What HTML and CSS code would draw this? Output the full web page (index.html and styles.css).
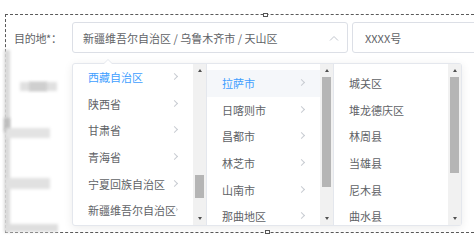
FILE: index.html
```html
<!DOCTYPE html>
<html lang="zh">
<head>
<meta charset="utf-8">
<title>目的地</title>
<link rel="stylesheet" href="styles.css">
</head>
<body>
<div class="stage">
  <div class="frame">
    <div class="form-row">
      <label class="label">目的地*：</label>
      <div class="input cascader">
        <span class="value">新疆维吾尔自治区 / 乌鲁木齐市 / 天山区</span>
        <svg class="caret" width="10" height="6" viewBox="0 0 10 6"><polyline points="1,5.5 5,1.5 9,5.5" fill="none" stroke="#c0c4cc" stroke-width="1"/></svg>
      </div>
      <div class="input addr"><span class="value">XXXX号</span></div>
    </div>

    <div class="backdrop">
      <div class="blur strip"></div>
      <div class="blur strip-dark"></div>
      <div class="blur b1"></div>
      <div class="blur b1c"></div>
      <div class="blur b2"></div>
      <div class="blur b3"></div>
      <div class="blur b4"></div>
    </div>

    <span class="handle handle-top"></span>
    <span class="handle handle-bottom"></span>

    <div class="dropdown">
      <span class="pop-arrow"></span>
      <div class="menu menu-1">
        <ul class="list list-scrolled">
          <li class="item active"><span>西藏自治区</span><i class="chev"></i></li>
          <li class="item"><span>陕西省</span><i class="chev"></i></li>
          <li class="item"><span>甘肃省</span><i class="chev"></i></li>
          <li class="item"><span>青海省</span><i class="chev"></i></li>
          <li class="item"><span>宁夏回族自治区</span><i class="chev"></i></li>
          <li class="item"><span class="over">新疆维吾尔自治区</span><i class="chev"></i></li>
        </ul>
        <div class="sbar">
          <div class="sbtn up"></div>
          <div class="track"><div class="thumb" style="margin-top:98px;height:23px"></div></div>
          <div class="sbtn down"></div>
        </div>
      </div>
      <div class="menu menu-2">
        <ul class="list">
          <li class="item active hover"><span>拉萨市</span><i class="chev"></i></li>
          <li class="item"><span>日喀则市</span><i class="chev"></i></li>
          <li class="item"><span>昌都市</span><i class="chev"></i></li>
          <li class="item"><span>林芝市</span><i class="chev"></i></li>
          <li class="item"><span>山南市</span><i class="chev"></i></li>
          <li class="item"><span>那曲地区</span><i class="chev"></i></li>
        </ul>
        <div class="sbar">
          <div class="sbtn up"></div>
          <div class="track"><div class="thumb" style="margin-top:0;height:110px"></div></div>
          <div class="sbtn down"></div>
        </div>
      </div>
      <div class="menu menu-3">
        <ul class="list">
          <li class="item"><span>城关区</span></li>
          <li class="item"><span>堆龙德庆区</span></li>
          <li class="item"><span>林周县</span></li>
          <li class="item"><span>当雄县</span></li>
          <li class="item"><span>尼木县</span></li>
          <li class="item"><span>曲水县</span></li>
        </ul>
        <div class="sbar">
          <div class="sbtn up"></div>
          <div class="track"><div class="thumb" style="margin-top:0;height:96px"></div></div>
          <div class="sbtn down"></div>
        </div>
      </div>
    </div>
  </div>
</div>
</body>
</html>
```

FILE: styles.css
```css
* { box-sizing: border-box; }
html, body {
  margin: 0;
  padding: 0;
  background: #fff;
}
body {
  width: 474px;
  height: 245px;
  overflow: hidden;
  font-family: "Noto Sans CJK SC", "Noto Sans", sans-serif;
  font-size: 11px;
  color: #606266;
}
.stage {
  padding: 14px 0 0 5px;
}
.frame {
  position: relative;
  height: 219px;
  border-top: 1px dashed #5a5a5a;
  border-left: 1px dashed #5a5a5a;
  border-bottom: 1px dashed #5a5a5a;
}
.form-row {
  display: flex;
  align-items: center;
  gap: 4px;
  padding: 7px 0 0 8px;
  width: 520px;
}
.label {
  flex: none;
  width: 54px;
  color: #606266;
  font-size: 11px;
  letter-spacing: -0.3px;
}
.input {
  flex: none;
  height: 31px;
  border: 1px solid #dcdfe6;
  border-radius: 3px;
  display: flex;
  align-items: center;
  padding: 0 8px 0 10px;
  background: #fff;
}
.cascader {
  width: 276px;
  justify-content: space-between;
}
.addr {
  width: 130px;
  padding-left: 12px;
}
.value {
  white-space: nowrap;
  color: #606266;
}
.caret { flex: none; }

/* blurred background content */
.backdrop {
  position: absolute;
  left: -6px;
  top: -15px;
  width: 70px;
  height: 245px;
  pointer-events: none;
}
.blur {
  position: absolute;
  filter: blur(1.5px);
}
.strip { left: 4px; top: 50px; width: 6px; height: 182px; background: #dadada; }
.strip-dark { left: 4px; top: 118px; width: 6px; height: 14px; background: #bdbdbd; }
.b1 { left: 20px; top: 82px; width: 37px; height: 9px; background: #e0e0e0; }
.b1c { left: 29px; top: 82px; width: 18px; height: 9px; background: #cfcfcf; }
.b2 { left: 6px; top: 128px; width: 44px; height: 10px; background: #e3e3e3; }
.b3 { left: 6px; top: 178px; width: 44px; height: 11px; background: #e1e1e1; }
.b4 { left: 6px; top: 224px; width: 52px; height: 8px; background: #dedede; }

.handle {
  position: absolute;
  width: 5px;
  height: 4px;
  border: 1px solid #555;
  background: #fff;
}
.handle-top { left: 257px; top: -2px; }
.handle-bottom { left: 259px; bottom: -2px; }

/* dropdown */
.dropdown {
  position: absolute;
  left: 66px;
  top: 48px;
  height: 163px;
  display: flex;
  background: #fff;
  border: 1px solid #e4e7ed;
  border-radius: 3px;
  box-shadow: 0 2px 10px rgba(0, 0, 0, 0.08);
}
.pop-arrow {
  position: absolute;
  left: 30px;
  top: -5px;
  width: 0;
  height: 0;
  border-left: 5px solid transparent;
  border-right: 5px solid transparent;
  border-bottom: 5px solid #e4e7ed;
}
.pop-arrow::after {
  content: "";
  position: absolute;
  left: -4px;
  top: 1px;
  border-left: 4px solid transparent;
  border-right: 4px solid transparent;
  border-bottom: 4px solid #fff;
}
.menu {
  display: flex;
  height: 100%;
  border-right: 1px solid #e4e7ed;
}
.menu:last-child { border-right: none; }
.menu-1 { width: 134px; }
.menu-2 { width: 127px; }
.menu-3 { width: 127px; }
.list {
  flex: 1;
  margin: 0;
  padding: 6px 0 0;
  list-style: none;
  overflow: hidden;
}
.list-scrolled { padding-top: 0; }
.item {
  position: relative;
  height: 26.6px;
  display: flex;
  align-items: center;
  padding: 0 14px 0 15px;
  white-space: nowrap;
  color: #606266;
}
.item span { position: relative; z-index: 1; }
.item .over { background: #fff; }
.item.active { color: #409eff; }
.item.hover { background: #f5f7fa; }
.chev {
  position: absolute;
  right: 16px;
  top: 50%;
  width: 5px;
  height: 5px;
  margin-top: -3px;
  border-top: 1px solid #c8ccd2;
  border-right: 1px solid #c8ccd2;
  transform: rotate(45deg);
}

/* scrollbars */
.sbar {
  flex: none;
  width: 13px;
  height: 100%;
  display: flex;
  flex-direction: column;
  background: #f1f1f1;
}
.sbtn {
  flex: none;
  height: 13px;
  display: flex;
  align-items: center;
  justify-content: center;
}
.sbtn::before {
  content: "";
  width: 0;
  height: 0;
  border-left: 2.5px solid transparent;
  border-right: 2.5px solid transparent;
}
.sbtn.up::before { border-bottom: 3px solid #505050; }
.sbtn.down::before { border-top: 3px solid #505050; }
.track {
  flex: 1;
  padding: 0 2px;
}
.thumb {
  background: #b5b5b5;
  width: 100%;
}
```
